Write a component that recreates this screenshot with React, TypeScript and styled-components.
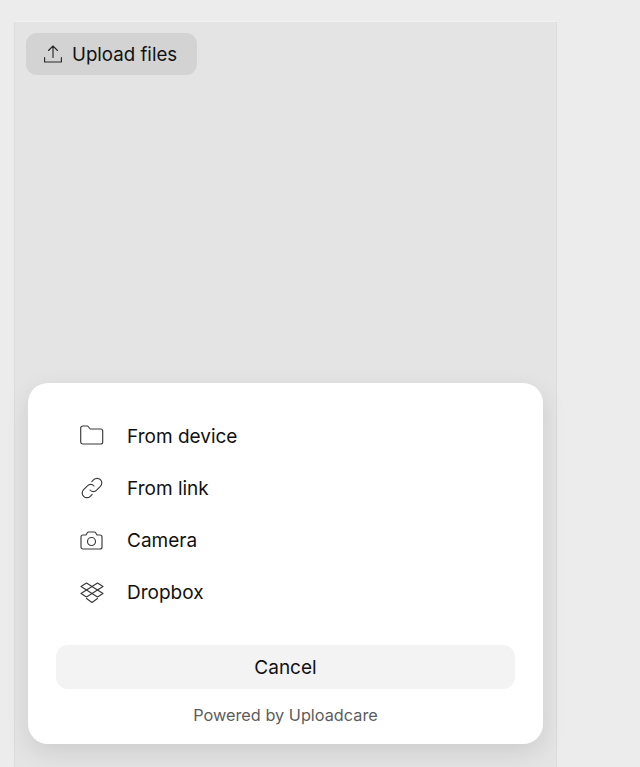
import React from 'react'
import styled, { createGlobalStyle } from 'styled-components'

const GlobalStyle = createGlobalStyle`
  html, body {
    margin: 0;
    height: 100%;
    background: #ececec;
    font-family: Inter, "Liberation Sans", sans-serif;
    color: #111;
  }
  #root {
    height: 100%;
  }
`

const Page = styled.div`
  height: 767px;
  overflow: hidden;
  padding: 21px 83px 0 14px;
  box-sizing: border-box;
`

const Panel = styled.main`
  height: 746px;
  box-sizing: border-box;
  background: #e4e4e4;
  border: 1px solid #dcdcdc;
  border-top-color: #f2f2f2;
  border-bottom: none;
  padding: 11px 13px 23px 11px;
  display: flex;
  flex-direction: column;
  align-items: flex-start;
`

const UploadButton = styled.button`
  width: 171px;
  height: 42px;
  padding: 0 0 0 18px;
  display: flex;
  align-items: center;
  gap: 10px;
  border: none;
  border-radius: 11px;
  background: #d3d3d3;
  color: #111;
  font: 400 18.7px Inter, sans-serif;
  cursor: pointer;
`

const UploadIcon = styled.svg`
  width: 18px;
  height: 18px;
  flex: none;
  fill: none;
  stroke: #2a2a2a;
  stroke-width: 1.15;
  stroke-linecap: round;
  stroke-linejoin: round;
`

const Dialog = styled.section`
  margin: auto 0 0 2px;
  width: 515px;
  height: 361px;
  box-sizing: border-box;
  padding: 27px 28px 0;
  background: #fff;
  border-radius: 20px;
  box-shadow: 0 8px 24px rgba(0, 0, 0, 0.1);
  display: flex;
  flex-direction: column;
`

const SourceList = styled.ul`
  list-style: none;
  margin: 0;
  padding: 0;
  display: flex;
  flex-direction: column;
`

const Source = styled.li`
  height: 52px;
  display: flex;
  align-items: center;
  gap: 23px;
  padding-left: 24px;
  font-size: 19px;
  color: #111;
`

const SourceIcon = styled.svg`
  width: 24px;
  height: 24px;
  flex: none;
  fill: none;
  stroke: #3a3a3a;
  stroke-width: 1.15;
  stroke-linecap: round;
  stroke-linejoin: round;
`

const CancelButton = styled.button`
  margin-top: 27px;
  height: 44px;
  flex: none;
  padding: 1px 0 0;
  border: none;
  border-radius: 12px;
  background: #f3f3f3;
  color: #111;
  font: 400 19px Inter, sans-serif;
  cursor: pointer;
`

const Powered = styled.div`
  margin-top: 16px;
  text-align: center;
  font-size: 16.3px;
  line-height: 20px;
  color: #5c5c5c;
`

const sources = [
  {
    label: 'From device',
    icon: <path d="M.7 4A2 2 0 0 1 2.700 2h5l2.500 3h10.500a2 2 0 0 1 2 2v11a2 2 0 0 1-2 2h-18a2 2 0 0 1-2-2Z" />,
  },
  {
    label: 'From link',
    icon: (
      <>
        <path d="M10 14a4.400 4.400 0 0 0 6.600.2l3.800-3.800a4.700 4.700 0 0 0-6.700-6.700l-1.900 1.900" />
        <path d="M14 10a4.400 4.400 0 0 0-6.600-.2l-3.800 3.800a4.700 4.700 0 0 0 6.700 6.700l1.900-1.900" />
      </>
    ),
  },
  {
    label: 'Camera',
    icon: (
      <>
        <path d="M3 7h3l1.300-2.200A1.500 1.500 0 0 1 8.600 4h5.800a1.500 1.500 0 0 1 1.300.8L17 7h3a2 2 0 0 1 2 2v10a2 2 0 0 1-2 2H3a2 2 0 0 1-2-2V9a2 2 0 0 1 2-2Z" />
        <circle cx="11.500" cy="13.500" r="4" />
      </>
    ),
  },
  {
    label: 'Dropbox',
    icon: (
      <>
        <path d="M6.500 3 12 6.500 6.500 10 1 6.500Z" />
        <path d="M17.500 3 23 6.500 17.500 10 12 6.500Z" />
        <path d="M6.500 10 12 13.500 6.500 17 1 13.500Z" />
        <path d="M17.500 10 23 13.500 17.500 17 12 13.500Z" />
        <path d="M6.500 18.500 12 22.500 17.500 18.500" />
      </>
    ),
  },
]

function App () {
  return (
    <Page>
      <GlobalStyle />
      <Panel>
        <UploadButton type='button'>
          <UploadIcon viewBox='0 0 18 18'>
            <path d="M9 12.500V1M4.500 5.500 9 1l4.500 4.500M.6 12.500v4.500h16.800v-4.500" />
          </UploadIcon>
          Upload files
        </UploadButton>
        <Dialog>
          <SourceList>
            {sources.map(source => (
              <Source key={source.label}>
                <SourceIcon viewBox='0 0 24 24'>{source.icon}</SourceIcon>
                {source.label}
              </Source>
            ))}
          </SourceList>
          <CancelButton type='button'>Cancel</CancelButton>
          <Powered>Powered by Uploadcare</Powered>
        </Dialog>
      </Panel>
    </Page>
  )
}

export default App
